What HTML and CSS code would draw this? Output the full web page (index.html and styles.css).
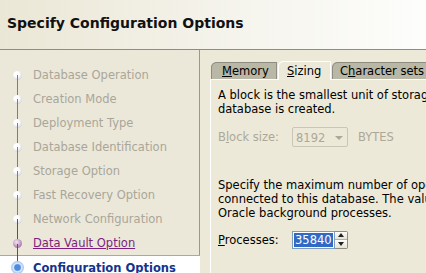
FILE: index.html
```html
<!DOCTYPE html>
<html lang="en">
<head>
  <meta charset="UTF-8" />
  <meta name="viewport" content="width=device-width, initial-scale=1.0" />
  <title>Specify Configuration Options</title>
  <link rel="stylesheet" href="styles.css">
</head>
<body>

  <!-- Wizard header -->
  <div class="header">
    <h1>Specify Configuration Options</h1>
  </div>

  <div class="main">

    <!-- Wizard steps -->
    <ol class="steps">
      <li class="step">Database Operation</li>
      <li class="step">Creation Mode</li>
      <li class="step">Deployment Type</li>
      <li class="step">Database Identification</li>
      <li class="step">Storage Option</li>
      <li class="step">Fast Recovery Option</li>
      <li class="step">Network Configuration</li>
      <li class="step visited"><a href="#">Data Vault Option</a></li>
      <li class="step current">Configuration Options</li>
    </ol>

    <!-- Tabbed content -->
    <div class="content">
      <div class="tabs">
        <div class="tab"><u>M</u>emory</div>
        <div class="tab active"><u>S</u>izing</div>
        <div class="tab">C<u>h</u>aracter sets</div>
      </div>

      <div class="pane">
        <p>A block is the smallest unit of storage used by the Oracle<br>database is created.</p>

        <div class="field disabled block-row">
          <span class="label">B<u>l</u>ock size:</span>
          <div class="combo">
            <span>8192</span>
            <span class="combo-arrow"></span>
          </div>
          <span class="unit">BYTES</span>
        </div>

        <p class="gap">Specify the maximum number of operating system user processes that can be<br>connected to this database. The value must be at least 6 plus the number of<br>Oracle background processes.</p>

        <div class="field proc-row">
          <span class="label"><u>P</u>rocesses:</span>
          <div class="spinner">
            <div class="spin-input"><span class="selected">35840</span></div>
            <div class="spin-buttons">
              <span class="spin-btn"><span class="up"></span></span>
              <span class="spin-btn"><span class="down"></span></span>
            </div>
          </div>
        </div>
      </div>
    </div>

  </div>

</body>
</html>
```

FILE: styles.css
```css
* {
  margin: 0;
  padding: 0;
  box-sizing: border-box;
  font-family: "DejaVu Sans", sans-serif;
}

html, body {
  width: 426px;
  height: 273px;
  overflow: hidden;
}

body {
  background: #ece9d8;
  display: flex;
  flex-direction: column;
  font-size: 11.5px;
  color: #000;
}

/* Header */
.header {
  height: 50px;
  flex-shrink: 0;
  background: linear-gradient(to right, #ebe7d6, #f6f5ee 60%, #fdfdfc);
  border-bottom: 1px solid #8d8d86;
  display: flex;
  align-items: center;
  padding: 0 0 3px 7px;
}

.header h1 {
  font-size: 14px;
  font-weight: bold;
  color: #111;
}

.main {
  flex: 1;
  display: flex;
  min-height: 0;
}

/* Steps list */
.steps {
  width: 200px;
  flex-shrink: 0;
  list-style: none;
  background: #ebe8d9;
  border-right: 1px solid #9a9890;
  padding-top: 13px;
}

.step {
  position: relative;
  height: 24px;
  display: flex;
  align-items: center;
  padding-left: 33px;
  color: #a9a699;
  white-space: nowrap;
}

.step::before {
  content: "";
  position: absolute;
  left: 17px;
  top: -12px;
  width: 1px;
  height: 24px;
  background: #7d7d7d;
}

.step:first-child::before {
  display: none;
}

.step::after {
  content: "";
  position: absolute;
  left: 13px;
  top: 8px;
  width: 9px;
  height: 9px;
  border-radius: 50%;
  background: radial-gradient(circle at 40% 35%, #ffffff 30%, #d6d8e4 75%, #a9abbb);
}

.step.visited a {
  color: #7d1f80;
  text-decoration: underline;
}

.step.visited::before,
.step.current::before {
  background: #7a3c7c;
}

.step.visited::after {
  background: radial-gradient(circle at 40% 35%, #e9d6ea 10%, #b98cbb 60%, #8b5a8e);
}

.step.current {
  background: #fff;
  border-top: 1px solid #a8a8a8;
  margin-right: -1px;
  color: #13338c;
  font-weight: bold;
  padding-top: 1px;
}

.step.current::after {
  left: 11px;
  top: 5px;
  width: 13px;
  height: 13px;
  background: radial-gradient(circle, #4d8be0 0 30%, #dbe8f8 45%, #9fc0ea 70%, #5b8fd6);
}

/* Tabbed content */
.content {
  flex: 1;
  padding: 10px 0 0 10px;
  display: flex;
  flex-direction: column;
  min-width: 0;
  overflow: hidden;
}

.tabs {
  display: flex;
  align-items: flex-end;
  height: 19px;
  padding-left: 1px;
  white-space: nowrap;
}

.tab {
  height: 17px;
  background: #b9b7a6;
  border: 1px solid #8f8d80;
  border-bottom: none;
  border-top-left-radius: 6px 5px;
  padding: 0 10px 0 10px;
  display: flex;
  align-items: center;
  margin-right: 1px;
}

.tab:first-child {
  width: 66px;
}

.tab.active {
  height: 19px;
  background: #ece9d8;
  border-color: #fff;
  width: 53px;
  position: relative;
  top: 1px;
  padding-left: 8px;
}

.tab:last-child {
  padding-left: 7px;
}

.pane {
  flex: 1;
  border-top: 1px solid #fff;
  border-left: 1px solid #fff;
  padding: 8px 0 0 7px;
  white-space: nowrap;
  line-height: 14px;
}

.pane p.gap {
  margin-top: 31px;
}

.field {
  display: flex;
  align-items: center;
}

.label {
  width: 74px;
}

.disabled {
  color: #aca899;
}

.block-row {
  margin-top: 11px;
  height: 20px;
}

.combo {
  width: 56px;
  height: 20px;
  border: 1px solid #c9c6b8;
  border-radius: 2px;
  display: flex;
  align-items: center;
  justify-content: space-between;
  padding: 1px 4px 0 3px;
}

.combo-arrow {
  width: 0;
  height: 0;
  border-left: 4px solid transparent;
  border-right: 4px solid transparent;
  border-top: 4px solid #aca899;
}

.unit {
  margin-left: 10px;
}

.proc-row {
  margin-top: 10px;
  height: 19px;
}

.spinner {
  display: flex;
  height: 18px;
  width: 56px;
}

.spin-input {
  flex: 1;
  border: 1px solid #7f9db9;
  background: #fff;
  padding: 1px 1px;
  display: flex;
  align-items: center;
}

.selected {
  background: #316ac5;
  color: #fff;
  padding: 0 1px 0 1px;
  line-height: 14px;
}

.spin-buttons {
  width: 14px;
  display: flex;
  flex-direction: column;
  border: 1px solid #8f8d80;
  border-left: none;
  border-radius: 0 2px 2px 0;
}

.spin-btn {
  flex: 1;
  display: flex;
  align-items: center;
  justify-content: center;
  background: linear-gradient(#fdfdfb, #e6e3d6);
}

.spin-btn + .spin-btn {
  border-top: 1px solid #b5b2a3;
}

.up {
  border-left: 3px solid transparent;
  border-right: 3px solid transparent;
  border-bottom: 4px solid #222;
}

.down {
  border-left: 3px solid transparent;
  border-right: 3px solid transparent;
  border-top: 4px solid #222;
}
```
